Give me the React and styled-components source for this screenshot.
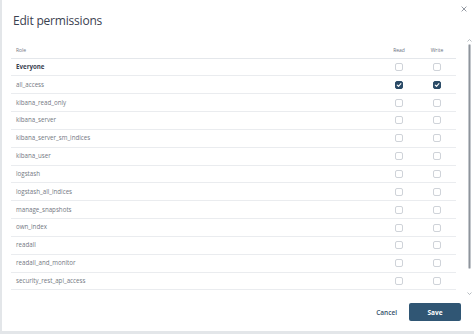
import React from "react";
import styled, { createGlobalStyle } from "styled-components";

const roles = [
  { name: "Everyone", bold: true, read: false, write: false },
  { name: "all_access", read: true, write: true },
  { name: "kibana_read_only" },
  { name: "kibana_server" },
  { name: "kibana_server_sm_indices" },
  { name: "kibana_user" },
  { name: "logstash" },
  { name: "logstash_all_indices" },
  { name: "manage_snapshots" },
  { name: "own_index" },
  { name: "readall" },
  { name: "readall_and_monitor" },
  { name: "security_rest_api_access" },
];

const GlobalStyle = createGlobalStyle`
  html, body {
    margin: 0;
    padding: 0;
  }
  body {
    font-family: "Open Sans", "DejaVu Sans", sans-serif;
  }
  * {
    box-sizing: border-box;
  }
`;

const Check = ({ checked }) => (
  <Box checked={checked}>
    {checked && (
      <svg width="6" height="6" viewBox="0 0 10 10">
        <path
          d="M2 5.2 L4.2 7.3 L8.2 2.8"
          fill="none"
          stroke="#fff"
          strokeWidth="1.8"
          strokeLinecap="round"
          strokeLinejoin="round"
        />
      </svg>
    )}
  </Box>
);

const App = () => {
  return (
    <Page>
      <GlobalStyle />
      <Modal>
        <Header>
          <Title>Edit permissions</Title>
          <Close aria-label="close">
            <svg width="6" height="6" viewBox="0 0 10 10">
              <path d="M1 1 L9 9 M9 1 L1 9" stroke="#69707d" strokeWidth="1.2" />
            </svg>
          </Close>
        </Header>

        <Body>
          <Table>
            <HeadRow>
              <RoleCell head>Role</RoleCell>
              <CheckCell head>Read</CheckCell>
              <CheckCell head>Write</CheckCell>
            </HeadRow>
            {roles.map((r) => (
              <Row key={r.name}>
                <RoleCell bold={r.bold}>{r.name}</RoleCell>
                <CheckCell>
                  <Check checked={r.read} />
                </CheckCell>
                <CheckCell>
                  <Check checked={r.write} />
                </CheckCell>
              </Row>
            ))}
          </Table>

          <Scrollbar>
            <Arrow>
              <svg width="5" height="3" viewBox="0 0 10 6">
                <path d="M1 5 L5 1 L9 5" fill="none" stroke="#9aa0a8" strokeWidth="1.4" />
              </svg>
            </Arrow>
            <Thumb />
            <Arrow>
              <svg width="5" height="3" viewBox="0 0 10 6">
                <path d="M1 1 L5 5 L9 1" fill="none" stroke="#9aa0a8" strokeWidth="1.4" />
              </svg>
            </Arrow>
          </Scrollbar>
        </Body>

        <Footer>
          <CancelButton>Cancel</CancelButton>
          <SaveButton>Save</SaveButton>
        </Footer>
      </Modal>
    </Page>
  );
};

export default App;

const Page = styled.div`
  width: 474px;
  height: 334px;
  background: #e3e6e9;
  padding-left: 2px;
  overflow: hidden;
`;

const Modal = styled.div`
  height: 331px;
  background: #ffffff;
  display: flex;
  flex-direction: column;
`;

const Header = styled.div`
  height: 37px;
  display: flex;
  justify-content: space-between;
  padding: 0 5px 0 11px;
`;

const Title = styled.h2`
  margin: 0;
  padding-top: 11px;
  font-size: 12px;
  font-weight: 400;
  line-height: 20px;
  color: #3a4150;
  letter-spacing: -0.2px;
`;

const Close = styled.button`
  border: none;
  background: none;
  padding: 0;
  margin-top: 4px;
  width: 10px;
  height: 10px;
  display: flex;
  align-items: center;
  justify-content: center;
  cursor: pointer;
`;

const Body = styled.div`
  height: 259px;
  display: flex;
  padding-left: 9px;
`;

const Table = styled.div`
  width: 445px;
  display: flex;
  flex-direction: column;
`;

const HeadRow = styled.div`
  height: 21.5px;
  display: flex;
  align-items: flex-end;
  padding-bottom: 5px;
  border-bottom: 1px solid #e4e7eb;
`;

const Row = styled.div`
  height: 17.85px;
  display: flex;
  align-items: center;
  border-bottom: 1px solid #eaecef;
`;

const RoleCell = styled.div`
  flex: 1;
  padding-left: 5px;
  font-size: ${(p) => (p.head ? "5px" : "6.2px")};
  font-weight: ${(p) => (p.bold ? 700 : 400)};
  color: ${(p) => (p.bold ? "#3a4150" : "#737882")};
  line-height: 1;
`;

const CheckCell = styled.div`
  width: 38px;
  display: flex;
  justify-content: center;
  align-items: center;
  font-size: 5px;
  color: #69707d;
  line-height: 1;
`;

const Box = styled.span`
  width: 8px;
  height: 8px;
  border-radius: 2px;
  display: flex;
  align-items: center;
  justify-content: center;
  border: 1px solid ${(p) => (p.checked ? "#2b4b67" : "#cfd3d9")};
  background: ${(p) => (p.checked ? "#2b4b67" : "#ffffff")};
`;

const Scrollbar = styled.div`
  flex: 1;
  display: flex;
  flex-direction: column;
  align-items: center;
  padding: 1px 0 0 9px;
`;

const Arrow = styled.div`
  height: 5px;
  display: flex;
  align-items: center;
`;

const Thumb = styled.div`
  width: 3px;
  height: 228px;
  margin: 1px 0 22px;
  border-radius: 2px;
  background: #8e949b;
  border: 1px solid #c2c6cb;
`;

const Footer = styled.div`
  flex: 1;
  display: flex;
  justify-content: flex-end;
  align-items: flex-start;
  padding: 7px 13px 0 0;
  gap: 12px;
`;

const CancelButton = styled.button`
  border: none;
  background: none;
  padding: 0;
  height: 18px;
  font-family: inherit;
  font-size: 6.5px;
  font-weight: 600;
  color: #34506a;
  cursor: pointer;
`;

const SaveButton = styled.button`
  width: 52px;
  height: 18px;
  border: none;
  border-radius: 2px;
  background: #305674;
  color: #ffffff;
  font-family: inherit;
  font-size: 6.5px;
  font-weight: 700;
  cursor: pointer;
`;
